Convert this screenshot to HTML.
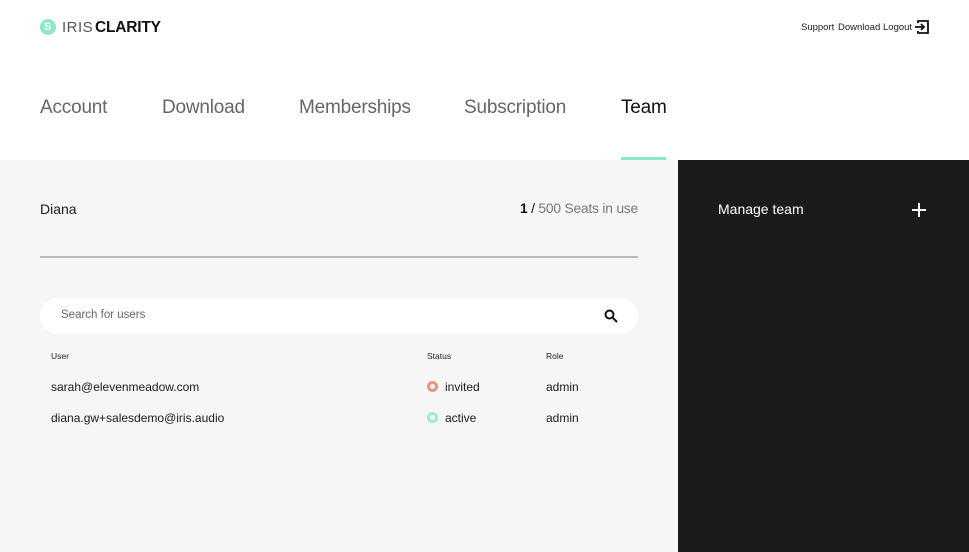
<!DOCTYPE html>
<html><head><meta charset="utf-8"><style>
*{margin:0;padding:0;box-sizing:border-box}
body{width:969px;height:552px;overflow:hidden;background:#fff;font-family:"Liberation Sans",sans-serif;color:#1a1a1a;position:relative}
.abs{position:absolute;white-space:nowrap}
.tab{position:absolute;top:97px;font-size:19px;color:#666;letter-spacing:-0.2px}
</style></head><body>
<div class="abs" style="left:40px;top:19px;width:16px;height:16px;border-radius:50%;background:#8de9c4"></div>
<div class="abs" style="left:44px;top:21px;font-size:11px;color:#fff;font-weight:bold">S</div>
<div class="abs" style="left:62px;top:19px;font-size:15px;color:#555;letter-spacing:0.5px">IRIS</div>
<div class="abs" style="left:95px;top:19px;font-size:15.5px;font-weight:bold;color:#111;letter-spacing:-0.2px">CLARITY</div>
<div class="abs" style="left:801px;top:22px;font-size:9.5px;color:#222">Support</div>
<div class="abs" style="left:838px;top:22px;font-size:9.5px;color:#222">Download</div>
<div class="abs" style="left:883px;top:22px;font-size:9.5px;color:#222">Logout</div>
<svg class="abs" style="left:914px;top:19px" width="16" height="16" viewBox="0 0 16 16" fill="none" stroke="#111" stroke-width="1.8"><path d="M4 4V2h10v12H4v-2"/><path d="M1 8h9M7 5l3 3-3 3"/></svg>
<div class="tab" style="left:40px">Account</div>
<div class="tab" style="left:162px">Download</div>
<div class="tab" style="left:299px">Memberships</div>
<div class="tab" style="left:464px">Subscription</div>
<div class="tab" style="left:621px;color:#111">Team</div>
<div class="abs" style="left:621px;top:157px;width:45px;height:3px;background:#8de9c4"></div>
<div class="abs" style="left:0;top:160px;width:678px;height:392px;background:#f6f6f6"></div>
<div class="abs" style="left:678px;top:160px;width:291px;height:392px;background:#1b1b1b"></div>
<div class="abs" style="left:40px;top:201px;font-size:14px">Diana</div>
<div class="abs" style="left:520px;top:201px;font-size:13.8px;color:#777;letter-spacing:-0.2px"><b style="color:#111">1</b> <span style="color:#111">/</span> 500 Seats in use</div>
<div class="abs" style="left:40px;top:256px;width:598px;height:2px;background:#bbb"></div>
<div class="abs" style="left:40px;top:298px;width:598px;height:36px;border-radius:18px;background:#fff"></div>
<div class="abs" style="left:61px;top:309px;font-size:11.5px;color:#666">Search for users</div>
<svg class="abs" style="left:604px;top:309px" width="14" height="14" viewBox="0 0 14 14" fill="none" stroke="#111" stroke-width="2"><circle cx="5.5" cy="5.5" r="4"/><path d="M8.5 8.5L13 13"/></svg>
<div class="abs" style="left:51px;top:351px;font-size:8.5px;color:#222">User</div>
<div class="abs" style="left:427px;top:351px;font-size:8.5px;color:#222">Status</div>
<div class="abs" style="left:546px;top:351px;font-size:8.5px;color:#222">Role</div>
<div class="abs" style="left:51px;top:380px;font-size:12px">sarah@elevenmeadow.com</div>
<div class="abs" style="left:427px;top:381px;width:11px;height:11px;border-radius:50%;border:3px solid #e99580"></div>
<div class="abs" style="left:445px;top:380px;font-size:12px">invited</div>
<div class="abs" style="left:546px;top:380px;font-size:12px">admin</div>
<div class="abs" style="left:51px;top:411px;font-size:12px">diana.gw+salesdemo@iris.audio</div>
<div class="abs" style="left:427px;top:412px;width:11px;height:11px;border-radius:50%;border:3px solid #9eecd0"></div>
<div class="abs" style="left:445px;top:411px;font-size:12px">active</div>
<div class="abs" style="left:546px;top:411px;font-size:12px">admin</div>
<div class="abs" style="left:718px;top:201px;font-size:14px;color:#fff">Manage team</div>
<svg class="abs" style="left:912px;top:203px" width="14" height="14" viewBox="0 0 14 14" stroke="#fff" stroke-width="2"><path d="M7 0v14M0 7h14"/></svg>
</body></html>
